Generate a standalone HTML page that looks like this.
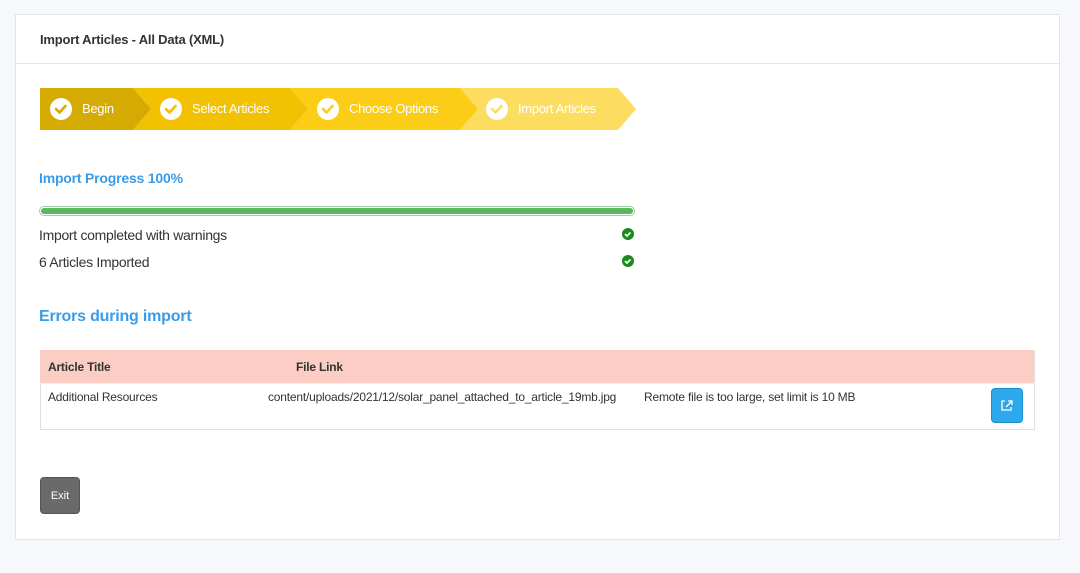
<!DOCTYPE html>
<html><head><style>
body{margin:0;width:1080px;height:573px;background:#f7f8fc;font-family:"Liberation Sans",sans-serif;position:relative;overflow:hidden}
.p{position:absolute;left:15px;top:14px;width:1043px;height:524px;background:#fff;border:1px solid #e3e5ea}
.a{position:absolute}
.hd{left:0;top:0;width:1043px;height:48px;border-bottom:1px solid #e3e5ea}
.st{color:#fff;font-size:13px;letter-spacing:-0.3px}
.t{font-size:12px;color:#333;letter-spacing:-0.2px}
</style></head><body>
<div class="p">
<div class="a hd"></div>
<div class="a" style="left:24px;top:17px;font-size:13px;font-weight:bold;color:#333;letter-spacing:-0.2px">Import Articles - All Data (XML)</div>
</div>
<svg class="a" style="left:0;top:0" width="1080" height="573">
<polygon points="460,88 618,88 636,109 618,130 460,130 478,109" fill="#fddd60"/>
<polygon points="290,88 460,88 478,109 460,130 290,130 308,109" fill="#fccd17"/>
<polygon points="133,88 290,88 308,109 290,130 133,130 151,109" fill="#f1c102"/>
<polygon points="40,88 133,88 151,109 133,130 40,130" fill="#d4aa03"/>
<g fill="#fff"><circle cx="61" cy="109" r="11"/><circle cx="171" cy="109" r="11"/><circle cx="328" cy="109" r="11"/><circle cx="497" cy="109" r="11"/></g>
<g fill="none" stroke-width="2.6" stroke-linecap="round" stroke-linejoin="round">
<path d="M56,109 l3.5,3.5 l6,-6.5" stroke="#d4aa03"/><path d="M166,109 l3.5,3.5 l6,-6.5" stroke="#f1c102"/><path d="M323,109 l3.5,3.5 l6,-6.5" stroke="#fccd17"/><path d="M492,109 l3.5,3.5 l6,-6.5" stroke="#fddd60"/>
</g>
<rect x="39.5" y="206.5" width="595" height="9" rx="4.5" fill="#fff" stroke="#a0d0a0"/>
<rect x="41" y="208" width="592" height="6" rx="3" fill="#5cb85c"/>
<g><circle cx="628" cy="234" r="6" fill="#1a8a1a"/><circle cx="628" cy="261" r="6" fill="#1a8a1a"/></g>
<g fill="none" stroke="#fff" stroke-width="1.8"><path d="M625,234 l2,2 l3.5,-3.5"/><path d="M625,261 l2,2 l3.5,-3.5"/></g>
</svg>
<div class="a st" style="left:82px;top:101px">Begin</div>
<div class="a st" style="left:192px;top:101px">Select Articles</div>
<div class="a st" style="left:349px;top:101px">Choose Options</div>
<div class="a st" style="left:518px;top:101px">Import Articles</div>
<div class="a" style="left:39px;top:170px;font-size:14px;font-weight:bold;color:#3a9ce8;letter-spacing:-0.2px">Import Progress 100%</div>
<div class="a" style="left:39px;top:227px;font-size:14px;color:#333;letter-spacing:-0.3px">Import completed with warnings</div>
<div class="a" style="left:39px;top:254px;font-size:14px;color:#333;letter-spacing:-0.3px">6 Articles Imported</div>
<div class="a" style="left:39px;top:308px;font-size:16px;font-weight:bold;color:#3a9ce8;letter-spacing:-0.2px">Errors during import</div>
<div class="a" style="left:40px;top:350px;width:993px;height:78px;border:1px solid #e0e0e0;background:#fff"></div>
<div class="a" style="left:40px;top:350px;width:994px;height:33px;background:#fbcdc4;border-bottom:1px solid #eee"></div>
<div class="a t" style="left:48px;top:360px;font-weight:bold">Article Title</div>
<div class="a t" style="left:296px;top:360px;font-weight:bold">File Link</div>
<div class="a t" style="left:48px;top:390px">Additional Resources</div>
<div class="a t" style="left:268px;top:390px">content/uploads/2021/12/solar_panel_attached_to_article_19mb.jpg</div>
<div class="a t" style="left:644px;top:390px">Remote file is too large, set limit is 10 MB</div>
<div class="a" style="left:991px;top:388px;width:32px;height:35px;border-radius:4px;background:#2ea8ec;border:1px solid #1a8fd0;box-sizing:border-box">
<svg width="32" height="35" style="position:absolute;left:-1px;top:-1px"><g fill="none" stroke="#fff" stroke-width="1.3"><path d="M14,13 h-3 v9 h9 v-3"/><path d="M15,19 l6,-6 M17,13 h4 v4"/></g></svg></div>
<div class="a" style="left:40px;top:477px;width:40px;height:37px;border-radius:4px;background:#6a6a6a;border:1px solid #555;box-sizing:border-box;color:#fff;font-size:11px;text-align:center;line-height:36px">Exit</div>
</body></html>
